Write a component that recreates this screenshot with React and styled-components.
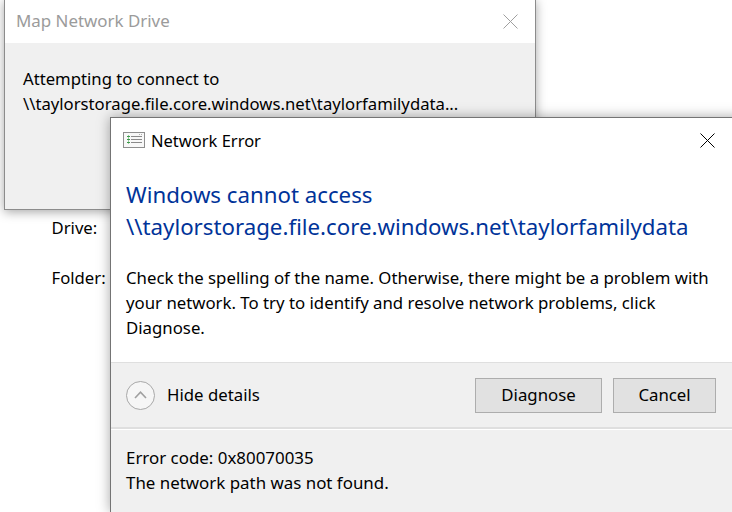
import React from "react";
import styled, { createGlobalStyle } from "styled-components";

const Global = createGlobalStyle`
  html, body { margin: 0; padding: 0; background: #fff; }
  #root { width: 732px; height: 512px; overflow: hidden; }
`;

const Desktop = styled.div`
  position: relative;
  width: 732px;
  height: 512px;
  overflow: hidden;
  background: #fff;
  font-family: "Noto Sans", "Open Sans", sans-serif;
  color: #000;
`;

const WizardWindow = styled.div`
  position: absolute;
  inset: 0;
  display: flex;
  flex-direction: column;
  gap: 27px;
  padding: 216px 0 0 51.5px;
`;

const FieldLabel = styled.div`
  font-size: 16.7px;
  line-height: 23px;
  color: #000;
`;

const BackWindow = styled.div`
  position: absolute;
  left: 4px;
  top: -1px;
  width: 532px;
  height: 211px;
  display: flex;
  flex-direction: column;
  background: #f0f0f0;
  border: solid #8c8c8c;
  border-width: 0 1px 1px 1px;
  box-sizing: border-box;
  box-shadow: 0 2px 10px rgba(0, 0, 0, 0.35);
`;

const BackTitleBar = styled.div`
  height: 44px;
  flex: none;
  background: #fff;
  display: flex;
  align-items: center;
  justify-content: space-between;
  padding: 0 17px 0 11px;
`;

const BackTitle = styled.div`
  font-size: 16.9px;
  color: #9b9b9b;
  padding-bottom: 1px;
`;

const BackBody = styled.div`
  padding: 23px 18px;
  font-size: 16.7px;
  line-height: 25px;
  white-space: nowrap;
`;

const FrontWindow = styled.div`
  position: absolute;
  left: 110px;
  top: 117px;
  width: 640px;
  height: 395px;
  box-sizing: border-box;
  display: flex;
  flex-direction: column;
  background: #fff;
  border: solid #747474;
  border-width: 1px 0 0 1px;
  box-shadow: 0 0 12px rgba(0, 0, 0, 0.35);
`;

const TitleBar = styled.div`
  height: 44px;
  flex: none;
  display: flex;
  align-items: center;
  padding: 0 17px 0 12px;
  gap: 6px;
  width: 621px;
  box-sizing: border-box;
`;

const FrontTitle = styled.div`
  flex: 1;
  font-size: 16.5px;
`;

const CloseGlyph = styled.svg`
  width: 15px;
  height: 15px;
  flex: none;
`;

const Content = styled.div`
  flex: 1;
  padding: 17px 0 0 15px;
  width: 606px;
`;

const Instruction = styled.div`
  font-size: 22.25px;
  line-height: 32px;
  color: #003399;
  white-space: nowrap;
`;

const Message = styled.div`
  margin-top: 22px;
  font-size: 16.8px;
  line-height: 25px;
  white-space: nowrap;
`;

const ActionBar = styled.div`
  flex: none;
  height: 64px;
  background: #f0f0f0;
  border-top: 1px solid #dfdfdf;
  border-bottom: 2px solid #dfdfdf;
  display: flex;
  align-items: center;
  padding: 0 0 0 15px;
`;

const ToggleCircle = styled.div`
  width: 29px;
  height: 29px;
  flex: none;
  border-radius: 50%;
  border: 1px solid #a8a8a8;
  background: #f6f6f6;
  display: flex;
  align-items: center;
  justify-content: center;
  box-sizing: border-box;
  margin-right: 12px;
`;

const ToggleLabel = styled.div`
  font-size: 16.8px;
  width: 308px;
  flex: none;
  padding-bottom: 2px;
`;

const Button = styled.div`
  width: ${(p) => p.$w}px;
  height: 35px;
  flex: none;
  box-sizing: border-box;
  margin-right: ${(p) => p.$gap}px;
  padding-bottom: 1px;
  background: #e1e1e1;
  border: 1px solid #adadad;
  display: flex;
  align-items: center;
  justify-content: center;
  font-size: 16.8px;
`;

const Details = styled.div`
  flex: none;
  height: 83px;
  box-sizing: border-box;
  background: #f0f0f0;
  border-top: 1px solid #fff;
  padding: 15px 15px;
  font-size: 16.9px;
  line-height: 25px;
  white-space: nowrap;
`;

const Close = ({ color }) => (
  <CloseGlyph viewBox="0 0 15 15">
    <path d="M0.5 0.5L14.5 14.5M14.5 0.5L0.5 14.5" stroke={color} strokeWidth="1" fill="none" />
  </CloseGlyph>
);

const ListIcon = () => (
  <svg width="22" height="16" viewBox="0 0 22 16" style={{ flex: "none" }}>
    <rect x="0.5" y="0.5" width="21" height="15" fill="#f8f8f8" stroke="#8e8e8e" />
    <path d="M16 2.5H20" stroke="#b0b0b0" strokeDasharray="1 1" />
    <path d="M8 4.5H19M8 7.5H19M8 10.5H19" stroke="#8a8a8a" />
    <path d="M4 4.5H7M4 7.5H7M4 10.5H7M5.5 3.5V5.5M5.5 6.5V8.5M5.5 9.5V11.5" stroke="#3c9a4a" />
  </svg>
);

export default function App() {
  return (
    <Desktop>
      <Global />
      <WizardWindow>
        <FieldLabel>Drive:</FieldLabel>
        <FieldLabel>Folder:</FieldLabel>
      </WizardWindow>
      <BackWindow>
        <BackTitleBar>
          <BackTitle>Map Network Drive</BackTitle>
          <Close color="#a0a0a0" />
        </BackTitleBar>
        <BackBody>
          Attempting to connect to
          <br />
          \\taylorstorage.file.core.windows.net\taylorfamilydata...
        </BackBody>
      </BackWindow>
      <FrontWindow>
        <TitleBar>
          <ListIcon />
          <FrontTitle>Network Error</FrontTitle>
          <Close color="#000" />
        </TitleBar>
        <Content>
          <Instruction>
            Windows cannot access
            <br />
            \\taylorstorage.file.core.windows.net\taylorfamilydata
          </Instruction>
          <Message>
            Check the spelling of the name. Otherwise, there might be a problem with
            <br />
            your network. To try to identify and resolve network problems, click
            <br />
            Diagnose.
          </Message>
        </Content>
        <ActionBar>
          <ToggleCircle>
            <svg width="13" height="8" viewBox="0 0 13 8">
              <path d="M1 7L6.5 1.2L12 7" stroke="#a0a0a0" strokeWidth="1.6" fill="none" />
            </svg>
          </ToggleCircle>
          <ToggleLabel>Hide details</ToggleLabel>
          <Button $w={127} $gap={11}>Diagnose</Button>
          <Button $w={103} $gap={0}>Cancel</Button>
        </ActionBar>
        <Details>
          Error code: 0x80070035
          <br />
          The network path was not found.
        </Details>
      </FrontWindow>
    </Desktop>
  );
}
